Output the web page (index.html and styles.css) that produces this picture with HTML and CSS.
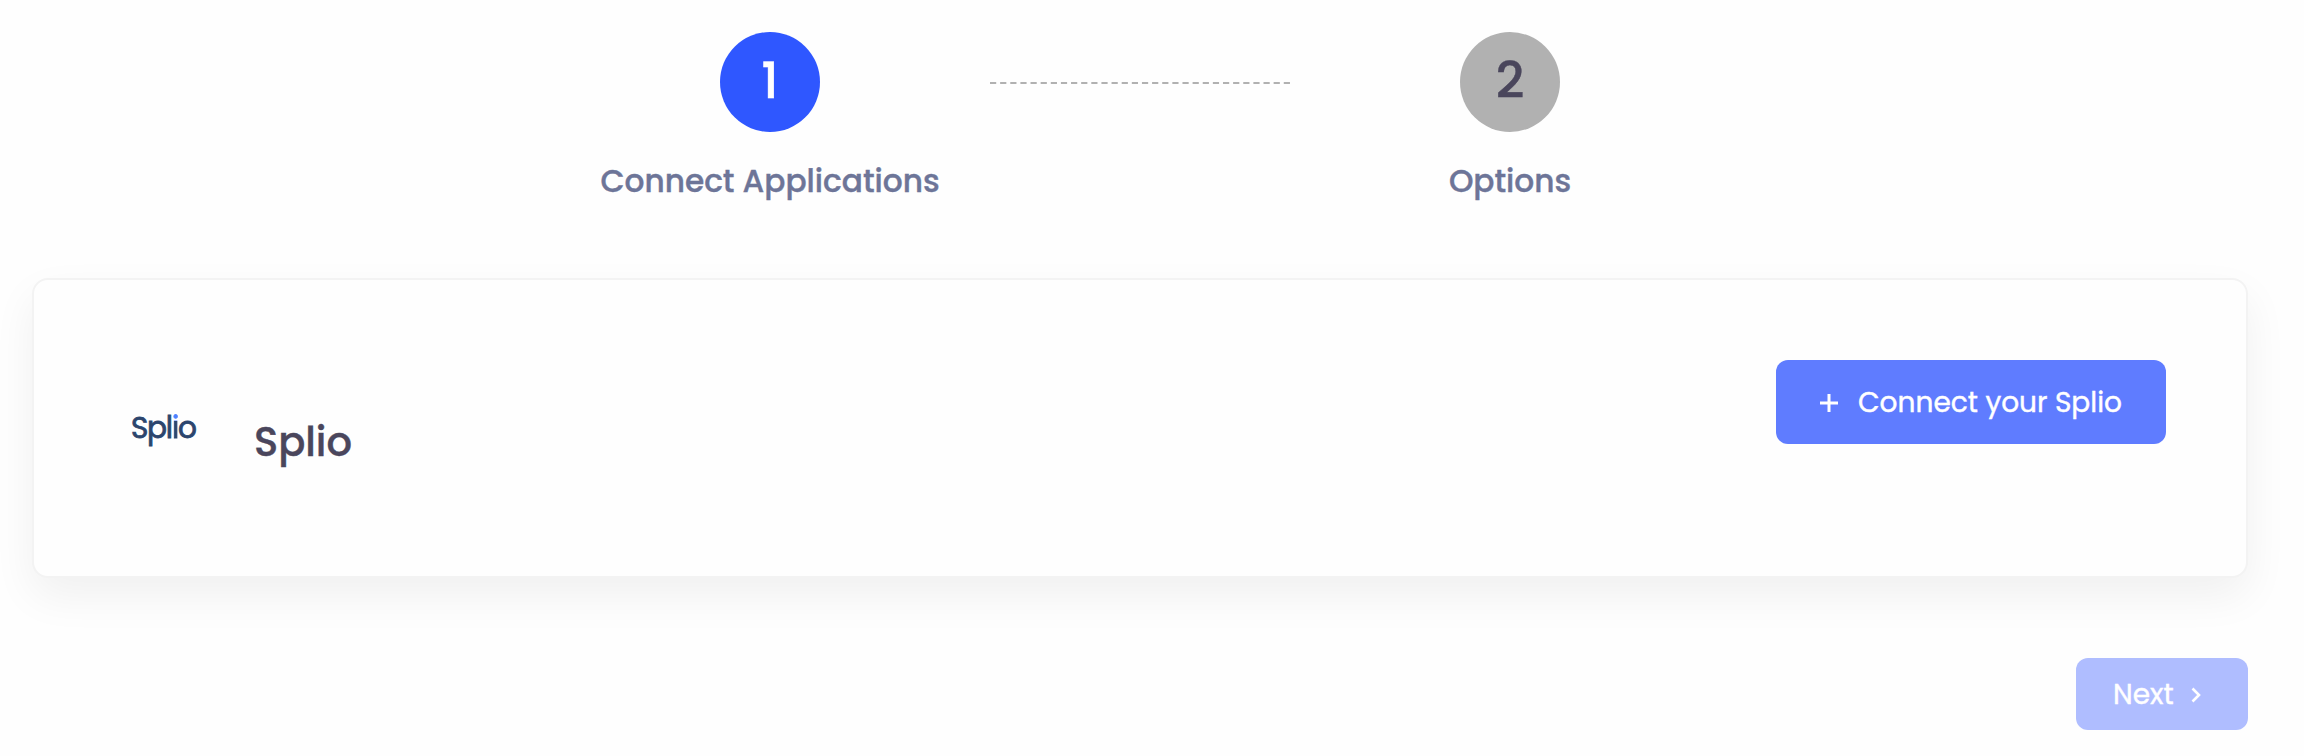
FILE: index.html
```html
<!DOCTYPE html>
<html lang="en">
<head>
<meta charset="utf-8">
<title>Connect Applications</title>
<link rel="stylesheet" href="styles.css">
</head>
<body>
<main class="page">
  <div class="stepper">
    <div class="step step-active">
      <div class="step-number">1</div>
      <div class="step-label">Connect Applications</div>
    </div>
    <svg class="step-line" width="300" height="2" viewBox="0 0 300 2"><path d="M0 1H300" stroke="#b1b1b1" stroke-width="2" stroke-dasharray="6.2 3.93"/></svg>
    <div class="step">
      <div class="step-number">2</div>
      <div class="step-label">Options</div>
    </div>
  </div>
  <section class="card">
    <div class="logo">Spl<span class="logo-i">i</span>o</div>
    <h2 class="app-name">Splio</h2>
    <button class="btn btn-connect">
      <svg width="18" height="18" viewBox="0 0 18 18"><path d="M9 0V18M0 9H18" stroke="#fff" stroke-width="3"/></svg>
      <span class="btn-text">Connect your Splio</span>
    </button>
  </section>
  <div class="actions">
    <button class="btn btn-next" disabled>
      <span class="btn-text">Next</span>
      <svg width="10" height="16" viewBox="0 0 10 16"><path d="M1.5 1.5L8 8L1.5 14.5" fill="none" stroke="#fff" stroke-width="2.6"/></svg>
    </button>
  </div>
</main>
</body>
</html>
```
FILE: styles.css
```css
* { box-sizing: border-box; }
body {
  margin: 0;
  background: #fefefe;
  font-family: Poppins, Inter, sans-serif;
  font-weight: 500;
  -webkit-text-stroke: 0.4px;
}
.page { height: 756px; padding: 32px 56px 0 32px; overflow: hidden; }
.stepper {
  display: flex;
  align-items: flex-start;
  height: 246px;
  padding-left: 538px;
}
.step {
  display: flex;
  flex-direction: column;
  align-items: center;
  width: 400px;
}
.step-number {
  width: 100px;
  height: 100px;
  border-radius: 50%;
  background: #b1b1b1;
  color: #4a465c;
  font-size: 49.5px;
  line-height: 98px;
  text-align: center;
}
.step-active .step-number { background: #2f57ff; color: #fff; }
.step-label {
  margin-top: 25px;
  color: #6d7598;
  font-size: 31.2px;
  line-height: 48px;
  white-space: nowrap;
}
.step-line { margin: 50px 20px 0 20px; flex: none; }
.card {
  display: flex;
  align-items: flex-start;
  height: 300px;
  padding: 80px 80px 0 97px;
  border: 2px solid #f3f3f3;
  border-radius: 16px;
  background: #fefefe;
  box-shadow: 0 18px 44px rgba(0, 0, 0, 0.06);
}
.logo {
  width: 123px;
  margin-top: 50px;
  color: #2b456d;
  font-size: 29.5px;
  font-weight: 400;
  line-height: 36px;
  letter-spacing: -1.2px;
  -webkit-text-stroke: 0.8px;
}
.logo-i {
  background: linear-gradient(#4d80ff 0 14px, #2b456d 14px);
  -webkit-background-clip: text;
  background-clip: text;
  color: transparent;
}
.app-name {
  margin: 57px 0 0;
  color: #4a465c;
  font-size: 40px;
  font-weight: 500;
  line-height: 50px;
}
.btn {
  display: flex;
  align-items: center;
  border: 0;
  border-radius: 12px;
  color: #fff;
  font-family: inherit;
  font-size: 28px;
  font-weight: 400;
  line-height: 40px;
  white-space: nowrap;
}
.btn-text { padding-top: 2px; }
.btn-connect {
  width: 390px;
  height: 84px;
  margin-left: auto;
  padding: 0 0 0 44px;
  gap: 20px;
  background: #5f7cff;
}
.actions { display: flex; justify-content: flex-end; padding-top: 80px; }
.btn-next {
  width: 172px;
  height: 72px;
  padding: 0 0 0 37px;
  gap: 17px;
  background: #afbdff;
}
.btn-next svg { margin-top: 2px; }
.btn-connect svg { margin-top: 2px; }
```
